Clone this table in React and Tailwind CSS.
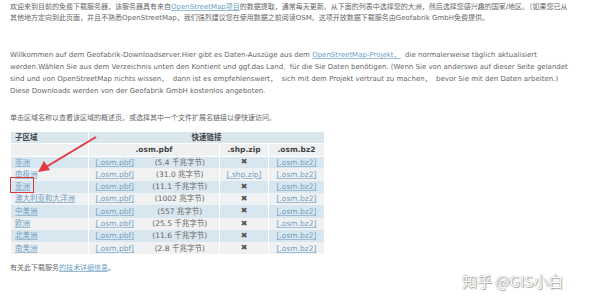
import React from "react";

const rows = [
  { name: "非洲", size: "(5.4 千兆字节)", shp: false },
  { name: "南极洲", size: "(31.0 兆字节)", shp: true },
  { name: "亚洲", size: "(11.1 千兆字节)", shp: false },
  { name: "澳大利亚和大洋洲", size: "(1002 兆字节)", shp: false },
  { name: "中美洲", size: "(557 兆字节)", shp: false },
  { name: "欧洲", size: "(25.5 千兆字节)", shp: false },
  { name: "北美洲", size: "(11.6 千兆字节)", shp: false },
  { name: "南美洲", size: "(2.8 千兆字节)", shp: false },
];

const link = "text-[#6f9ec2] underline decoration-[#9dbcd4]";

export default function App() {
  return (
    <div
      className="relative w-[600px] h-[305px] overflow-hidden bg-white pl-[10px] text-[7px] text-[#666]"
      style={{ fontFamily: '"DejaVu Sans", "Noto Sans CJK SC", sans-serif' }}
    >
      {/* chinese intro */}
      <div className="mt-[2px] leading-[11px] whitespace-nowrap">
        <div>
          欢迎来到目前的免费下载服务器，该服务器具有来自<span className={link}>OpenStreetMap项目</span>的数据提取，通常每天更新。从下面的列表中选择您的大洲，然后选择您感兴趣的国家/地区。（如果您已从
        </div>
        <div>
          其他地方定向到此页面，并且不熟悉OpenStreetMap，我们强烈建议您在使用数据之前阅读OSM。这项开放数据下载服务由Geofabrik GmbH免费提供。
        </div>
      </div>

      {/* german intro */}
      <div className="mt-[25px] leading-[12px] whitespace-pre">
        <div>
          Willkommen auf dem Geofabrik-Downloadserver.Hier gibt es Daten-Auszüge aus dem <span className={link}>OpenStreetMap-Projekt，</span>  die normalerweise täglich aktualisiert
        </div>
        <div>
          werden.Wählen Sie aus dem Verzeichnis unten den Kontient und ggf.das Land,  für die Sie Daten benötigen. (Wenn Sie von anderswo auf dieser Seite gelandet
        </div>
        <div>
          sind und von OpenStreetMap nichts wissen，  dann ist es empfehlenswert，  sich mit dem Projekt vertraut zu machen，  bevor Sie mit den Daten arbeiten.)
        </div>
        <div>Diese Downloads werden von der Geofabrik GmbH kostenlos angeboten.</div>
      </div>

      <div className="mt-[15px] leading-[12px]">
        单击区域名称以查看该区域的概述页。或选择其中一个文件扩展名链接以便快速访问。
      </div>

      {/* table */}
      <table className="mt-[7px] border-collapse text-[7.5px] leading-none">
        <colgroup>
          <col className="w-[78px]" />
          <col className="w-[52px]" />
          <col className="w-[79px]" />
          <col className="w-[49px]" />
          <col className="w-[56px]" />
        </colgroup>
        <thead>
          <tr className="h-[12.3px] bg-[#d9e6ed] text-[#444] font-bold">
            <th className="p-0 pl-[4px] text-left border border-white">子区域</th>
            <th colSpan={4} className="p-0 text-center border border-white">快速链接</th>
          </tr>
          <tr className="h-[12.3px] bg-[#eef0f1] text-[#444] font-bold">
            <th className="p-0 border border-white"></th>
            <th colSpan={2} className="p-0 text-center border border-white">.osm.pbf</th>
            <th className="p-0 text-center border border-white">.shp.zip</th>
            <th className="p-0 text-center border border-white">.osm.bz2</th>
          </tr>
        </thead>
        <tbody>
          {rows.map((r, i) => (
            <tr
              key={r.name}
              className={`h-[12.3px] ${i % 2 === 0 ? "bg-[#d8e7ef]" : "bg-[#f0f1f2]"}`}
            >
              <td className="p-0 pl-[4px] border-x border-white">
                <span className={link}>{r.name}</span>
              </td>
              <td className="p-0 text-center">
                <span className={link}>[.osm.pbf]</span>
              </td>
              <td className="p-0 text-center border-r border-white">{r.size}</td>
              <td className="p-0 text-center border-r border-white">
                {r.shp ? (
                  <span className={link}>[.shp.zip]</span>
                ) : (
                  <span className="text-[#555] text-[8px]">✖</span>
                )}
              </td>
              <td className="p-0 text-center border-r border-white">
                <span className={link}>[.osm.bz2]</span>
              </td>
            </tr>
          ))}
        </tbody>
      </table>

      <div className="mt-[8px] leading-[12px]">
        有关此下载服务<span className={link}>的技术详细信息</span>。
      </div>

      {/* red annotation */}
      <div className="absolute left-[10px] top-[177px] w-[24px] h-[16px] border-[1.5px] border-[#d9383c]" />
      <svg className="absolute left-0 top-0" width="120" height="200">
        <line x1="96" y1="137" x2="46" y2="167" stroke="#e0393e" strokeWidth="2" />
        <polygon points="38,172 44,161 50,170" fill="#e0393e" />
      </svg>

      {/* watermark */}
      <div
        className="absolute left-[462px] top-[270px] text-[15px] text-white [text-shadow:0_0_1px_#777,1px_1px_1px_#aaa]"
        style={{ fontFamily: '"Noto Sans CJK SC", sans-serif' }}
      >
        知乎 @GIS小白
      </div>
    </div>
  );
}
